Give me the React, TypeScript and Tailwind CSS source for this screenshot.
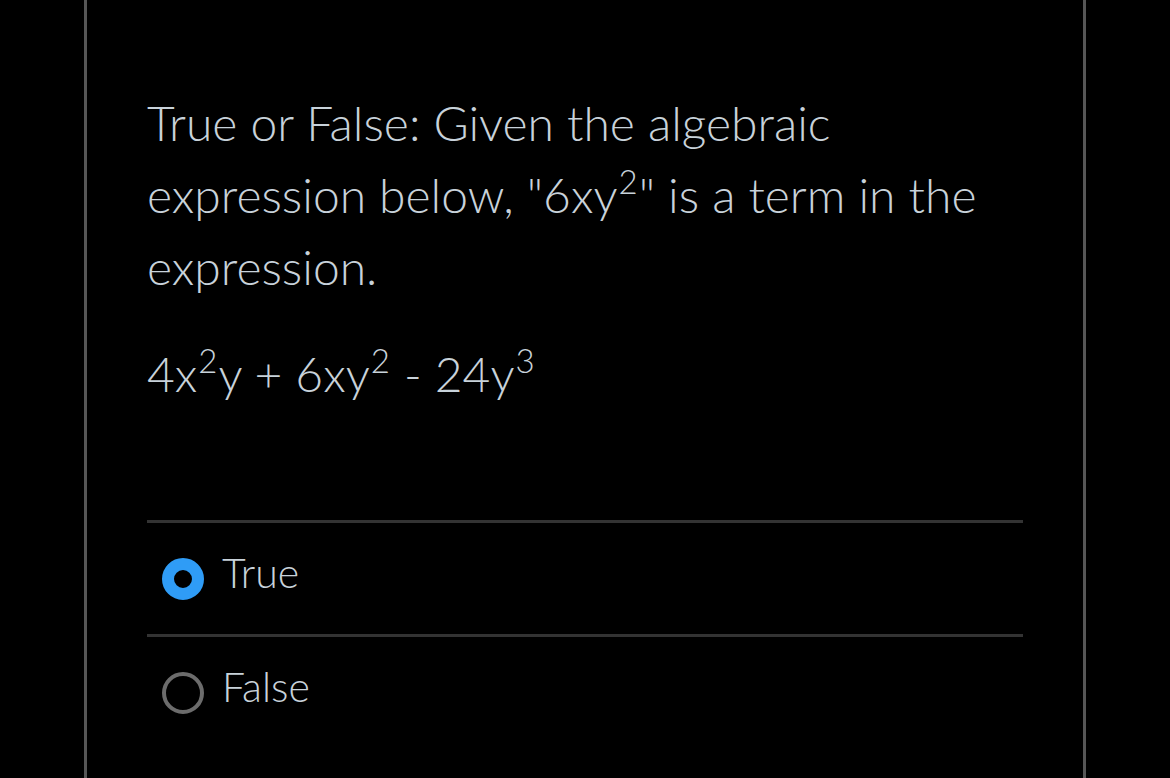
import React, { useState } from 'react';

const options = ['True', 'False'];

function Sup({ children }: { children: React.ReactNode }) {
  return <span className="relative top-[-19px] px-[1px] text-[33px] leading-none">{children}</span>;
}

export default function App() {
  const [selected, setSelected] = useState('True');

  return (
    <div
      className="h-[778px] w-full overflow-hidden bg-black text-[#c8d2da] font-light"
      style={{ fontFamily: 'Lato, "Liberation Sans", sans-serif' }}
    >
      <div className="mx-auto flex h-full w-[1002px] flex-col border-x-[3px] border-[#565656] px-[60px] pt-[87px]">
        <p className="text-[48px] leading-[72px]">
          True or False: Given the algebraic expression below, "6xy<Sup>2</Sup>" is a term in the expression.
        </p>
        <p className="mt-[35px] text-[48px] leading-[72px]">
          4x<Sup>2</Sup>y + 6xy<Sup>2</Sup> - 24y<Sup>3</Sup>
        </p>

        <div className="mt-[110px]">
          {options.map((opt) => {
            const checked = selected === opt;
            return (
              <button
                key={opt}
                type="button"
                onClick={() => setSelected(opt)}
                className="flex h-[114px] w-full items-center border-t-[3px] border-[#333333] pl-[15px] text-left"
              >
                <span
                  className={`box-border h-[42px] w-[42px] shrink-0 rounded-full bg-black ${
                    checked ? 'border-[12px] border-[#2f9cf6]' : 'border-[4px] border-[#6c6c6c]'
                  }`}
                />
                <span className="ml-[18px] pb-[12px] text-[41px] leading-none">{opt}</span>
              </button>
            );
          })}
        </div>
      </div>
    </div>
  );
}
